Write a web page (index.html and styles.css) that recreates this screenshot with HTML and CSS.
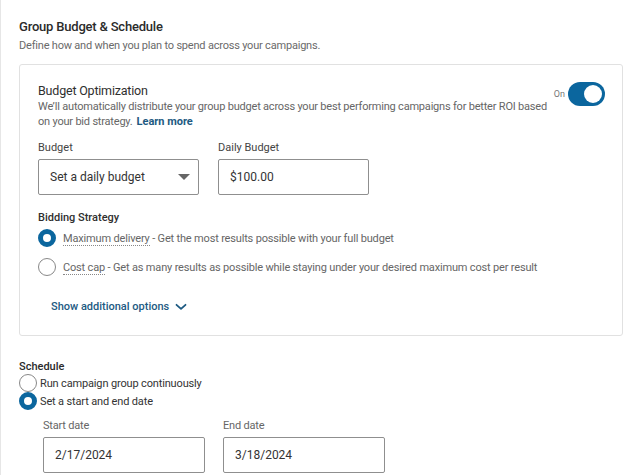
FILE: index.html
```html
<!DOCTYPE html>
<html>
<head>
<meta charset="utf-8">
<link rel="stylesheet" href="styles.css">
</head>
<body>
<div class="page">
  <h2 class="title">Group Budget &amp; Schedule</h2>
  <p class="subtitle">Define how and when you plan to spend across your campaigns.</p>

  <section class="card">
    <div class="opt-row">
      <div class="opt-text">
        <h3 class="opt-title">Budget Optimization</h3>
        <p class="opt-desc">We’ll automatically distribute your group budget across your best performing campaigns for better ROI based on your bid strategy.<a class="link" href="#">Learn more</a></p>
      </div>
      <div class="toggle-wrap">
        <span class="toggle-label">On</span>
        <span class="toggle"><span class="knob"></span></span>
      </div>
    </div>

    <div class="fields">
      <div class="field">
        <label class="label">Budget</label>
        <div class="box select">
          <span>Set a daily budget</span>
          <span class="caret"></span>
        </div>
      </div>
      <div class="field">
        <label class="label">Daily Budget</label>
        <div class="box input">$100.00</div>
      </div>
    </div>

    <h4 class="sub-head">Bidding Strategy</h4>
    <div class="radio-row strat">
      <span class="radio checked"></span>
      <span class="radio-text"><span class="dotted">Maximum delivery</span> - Get the most results possible with your full budget</span>
    </div>
    <div class="radio-row strat second">
      <span class="radio"></span>
      <span class="radio-text"><span class="dotted">Cost cap</span> - Get as many results as possible while staying under your desired maximum cost per result</span>
    </div>

    <a class="more" href="#">Show additional options
      <svg class="chev" width="12" height="8" viewBox="0 0 12 8"><path d="M1.5 1.8 L6 5.8 L10.5 1.8" fill="none" stroke="currentColor" stroke-width="1.8" stroke-linecap="round" stroke-linejoin="round"/></svg>
    </a>
  </section>

  <section class="schedule">
    <h4 class="sched-head">Schedule</h4>
    <div class="radio-row sched">
      <span class="radio"></span>
      <span class="sched-text">Run campaign group continuously</span>
    </div>
    <div class="radio-row sched">
      <span class="radio checked"></span>
      <span class="sched-text">Set a start and end date</span>
    </div>
    <div class="fields dates">
      <div class="field">
        <label class="label grey">Start date</label>
        <div class="box input date">2/17/2024</div>
      </div>
      <div class="field">
        <label class="label grey">End date</label>
        <div class="box input date">3/18/2024</div>
      </div>
    </div>
  </section>
</div>
</body>
</html>
```

FILE: styles.css
```css
* { box-sizing: border-box; }
html, body { margin: 0; padding: 0; background: #fff; }
body {
  font-family: Roboto, "Liberation Sans", sans-serif;
  color: #333;
  overflow: hidden;
}
.page {
  height: 475px;
  border-left: 1px solid #e6e6e6;
  padding: 16px 17px 0 18px;
}
.title {
  margin: 0;
  font-size: 13px;
  font-weight: 500;
  line-height: 20px;
  letter-spacing: -0.2px;
  color: #2b2b2b;
  padding-top: 1px;
}
.subtitle {
  margin: 0;
  font-size: 11px;
  line-height: 18px;
  letter-spacing: -0.2px;
  color: #6a6a6a;
}
.card {
  margin-top: 9px;
  border: 1px solid #e1e1e1;
  border-radius: 3px;
  padding: 17px 17px 18px 18px;
  height: 272px;
}
.opt-row {
  display: flex;
  align-items: flex-start;
  justify-content: space-between;
}
.opt-text { width: 520px; }
.opt-title {
  margin: 0;
  font-size: 12.5px;
  font-weight: 400;
  line-height: 18px;
  letter-spacing: -0.2px;
  color: #2f2f2f;
}
.opt-desc {
  margin: -1px 0 0 0;
  font-size: 11px;
  line-height: 15px;
  letter-spacing: -0.2px;
  color: #666;
}
.link {
  margin-left: 4px;
  letter-spacing: 0;
  color: #1d5a82;
  font-weight: 700;
  text-decoration: none;
}
.toggle-wrap {
  display: flex;
  align-items: center;
  gap: 3px;
}
.toggle-label {
  font-size: 9px;
  color: #777;
  line-height: 12px;
}
.toggle {
  width: 37px;
  height: 24px;
  border-radius: 12px;
  background: #0b669e;
  display: flex;
  align-items: center;
  justify-content: flex-end;
  padding-right: 3px;
}
.knob {
  width: 18px;
  height: 18px;
  border-radius: 50%;
  background: #fff;
}
.fields {
  display: flex;
  gap: 19px;
  margin-top: 11px;
}
.field { display: flex; flex-direction: column; }
.label {
  font-size: 11px;
  line-height: 16px;
  color: #444;
  margin-bottom: 3px;
}
.label.grey { color: #666; letter-spacing: -0.2px; }
.box {
  height: 36px;
  border: 1px solid #8f8f8f;
  border-radius: 2px;
  display: flex;
  align-items: center;
  font-size: 12px;
  color: #333;
  padding-left: 11px;
}
.select {
  width: 161px;
  justify-content: space-between;
  padding-right: 8px;
}
.caret {
  width: 0; height: 0;
  border-left: 6px solid transparent;
  border-right: 6px solid transparent;
  border-top: 6px solid #666;
}
.input { width: 151px; }
.sub-head {
  margin: 15px 0 0 0;
  font-size: 11px;
  font-weight: 500;
  line-height: 16px;
  color: #2f2f2f;
}
.radio-row {
  display: flex;
  align-items: center;
}
.strat { margin-top: 2px; height: 20px; }
.strat.second { margin-top: 9px; }
.radio {
  flex: none;
  width: 18px;
  height: 18px;
  border-radius: 50%;
  border: 1px solid #888;
  background: #fff;
}
.radio.checked {
  border: 5px solid #0b669e;
}
.radio-text {
  margin-left: 7px;
  font-size: 11px;
  letter-spacing: -0.17px;
  color: #666;
}
.dotted {
  border-bottom: 1px dotted #888;
}
.more {
  display: inline-flex;
  align-items: center;
  gap: 6px;
  margin: 23px 0 0 13px;
  font-size: 11px;
  font-weight: 500;
  color: #1d5a82;
  text-decoration: none;
}
.chev { color: #1d5a82; }
.schedule { margin-top: 23px; }
.sched-head {
  margin: 0;
  font-size: 11px;
  font-weight: 500;
  line-height: 15px;
  color: #2b2b2b;
}
.sched { height: 18px; }
.sched-text {
  margin-left: 3px;
  font-size: 11px;
  letter-spacing: -0.15px;
  color: #333;
}
.dates {
  margin-top: 8px;
  padding-left: 24px;
  gap: 18px;
}
.date { width: 162px; }
```
